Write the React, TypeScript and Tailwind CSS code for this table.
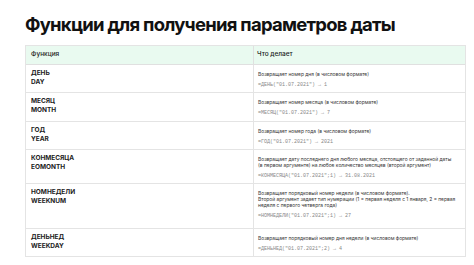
const rows = [
  {
    ru: "ДЕНЬ",
    en: "DAY",
    h: "h-[28px]",
    desc: ["Возвращает номер дня (в числовом формате)"],
    f: "=ДЕНЬ(\"01.07.2021\") → 1",
  },
  {
    ru: "МЕСЯЦ",
    en: "MONTH",
    h: "h-[29px]",
    desc: ["Возвращает номер месяца (в числовом формате)"],
    f: "=МЕСЯЦ(\"01.07.2021\") → 7",
  },
  {
    ru: "ГОД",
    en: "YEAR",
    h: "h-[28px]",
    desc: ["Возвращает номер года (в числовом формате)"],
    f: "=ГОД(\"01.07.2021\") → 2021",
  },
  {
    ru: "КОНМЕСЯЦА",
    en: "EOMONTH",
    h: "h-[34px]",
    desc: [
      "Возвращает дату последнего дня любого месяца, отстоящего от заданной даты",
      "(в первом аргументе) на любое количество месяцев (второй аргумент)",
    ],
    f: "=КОНМЕСЯЦА(\"01.07.2021\";1) → 31.08.2021",
  },
  {
    ru: "НОМНЕДЕЛИ",
    en: "WEEKNUM",
    h: "h-[45px]",
    desc: [
      "Возвращает порядковый номер недели (в числовом формате).",
      "Второй аргумент задает тип нумерации (1 = первая неделя с 1 января, 2 = первая",
      "неделя с первого четверга года)",
    ],
    f: "=НОМНЕДЕЛИ(\"01.07.2021\";1) → 27",
  },
  {
    ru: "ДЕНЬНЕД",
    en: "WEEKDAY",
    h: "h-[27px]",
    desc: ["Возвращает порядковый номер дня недели (в числовом формате)"],
    f: "=ДЕНЬНЕД(\"01.07.2021\";2) → 4",
  },
];

export default function App() {
  return (
    <div className="w-[474px] h-[265px] bg-white overflow-hidden font-['Inter','Noto_Sans',sans-serif]">
      {/* Title */}
      <h1 className="pl-[25px] pt-[12px] text-[18.5px] leading-[24px] font-bold text-[#111] tracking-[-0.75px]">
        Функции для получения параметров даты
      </h1>

      {/* Table */}
      <div className="ml-[25px] mt-[9px] w-[441px] border border-[#e4e4e4]">
        <div className="grid grid-cols-[228px_1fr] h-[19px] bg-[#e9faf0] border-b border-[#e0e0e0]">
          <div className="pl-[5px] flex items-center text-[6.5px] font-medium text-[#222] border-r border-[#e0e0e0]">
            Функция
          </div>
          <div className="pl-[3px] flex items-center text-[6.5px] font-medium text-[#222]">
            Что делает
          </div>
        </div>
        {rows.map((r, i) => (
          <div
            key={r.en}
            className={`grid grid-cols-[228px_1fr] ${r.h} ${
              i < rows.length - 1 ? "border-b border-[#e4e4e4]" : ""
            }`}
          >
            <div className="pl-[5px] pt-[4px] border-r border-[#e4e4e4] text-[6.5px] leading-[9px] font-bold text-[#222]">
              <div>{r.ru}</div>
              <div>{r.en}</div>
            </div>
            <div className="pl-[4px] pt-[6px] text-[4.9px] leading-[6px] text-[#333]">
              {r.desc.map((d) => (
                <div key={d} className="whitespace-nowrap">
                  {d}
                </div>
              ))}
              <div className="mt-[5px] font-['Liberation_Mono',monospace] text-[5px] leading-[6px] text-[#888] whitespace-nowrap">
                {r.f}
              </div>
            </div>
          </div>
        ))}
      </div>
    </div>
  );
}
